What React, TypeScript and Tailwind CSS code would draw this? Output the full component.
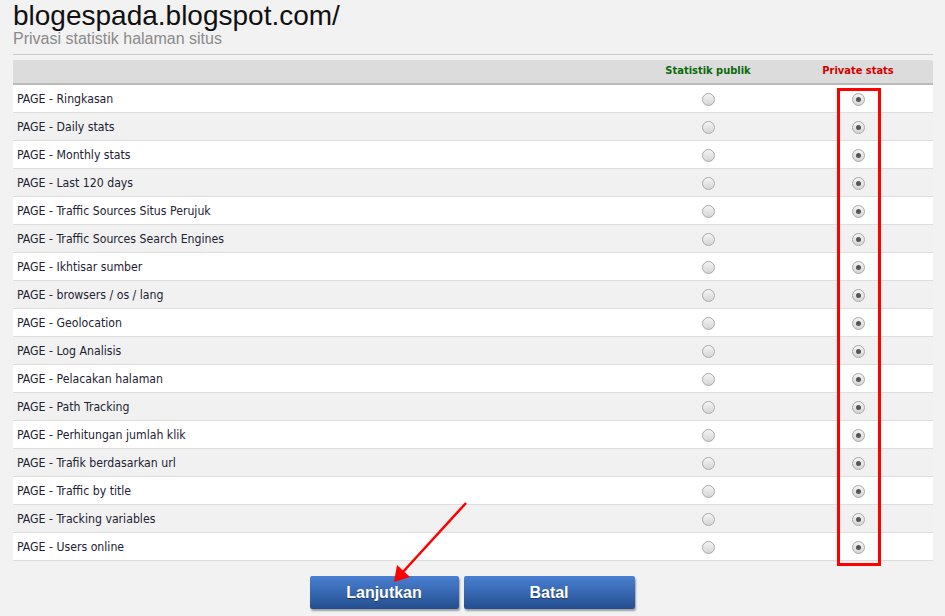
import React from "react";

const pages = [
  "Ringkasan",
  "Daily stats",
  "Monthly stats",
  "Last 120 days",
  "Traffic Sources Situs Perujuk",
  "Traffic Sources Search Engines",
  "Ikhtisar sumber",
  "browsers / os / lang",
  "Geolocation",
  "Log Analisis",
  "Pelacakan halaman",
  "Path Tracking",
  "Perhitungan jumlah klik",
  "Trafik berdasarkan url",
  "Traffic by title",
  "Tracking variables",
  "Users online",
];

const Radio: React.FC<{ checked?: boolean }> = ({ checked }) => (
  <span className="inline-flex w-[13px] h-[13px] rounded-full border border-[#a9a9a9] bg-gradient-to-b from-[#f4f4f4] to-[#d6d6d6] items-center justify-center">
    {checked && <span className="w-[5px] h-[5px] rounded-full bg-[#555]" />}
  </span>
);

const App: React.FC = () => {
  return (
    <div className="relative w-[945px] h-[616px] bg-[#f2f2f2] overflow-hidden font-['Liberation_Sans',Arial,sans-serif]">
      <div className="pl-[13px] pr-[12px]">
        <div className="text-[28px] leading-[30px] text-[#111] pt-[1px]">blogespada.blogspot.com/</div>
        <div className="text-[16px] leading-[16px] text-[#8a8a8a]">Privasi statistik halaman situs</div>
        <div className="mt-[7px] h-px bg-[#cccccc]" />

        <div className="mt-[5px] font-['DejaVu_Sans_Condensed','DejaVu_Sans',sans-serif]">
          <div className="flex h-[25px] bg-[#dcdcdc] rounded-tr-[3px] border-b-2 border-[#b9b9b9] text-[11px] font-bold items-center">
            <div className="flex-1" />
            <div className="w-[150px] text-center text-[#0a6a0a]">Statistik publik</div>
            <div className="w-[150px] text-center text-[#d40000]">Private stats</div>
          </div>
          {pages.map((p, i) => (
            <div
              key={p}
              className={`flex h-[28px] pt-[1px] items-center border-b border-[#dddddd] text-[12.2px] text-[#222233] ${i % 2 === 0 ? "bg-white" : "bg-[#f1f1f1]"}`}
            >
              <div className="flex-1 pl-[4px]">PAGE - {p}</div>
              <div className="w-[150px] flex justify-center">
                <Radio />
              </div>
              <div className="w-[150px] flex justify-center">
                <Radio checked />
              </div>
            </div>
          ))}
        </div>

        <div className="flex justify-center gap-[5px] mt-[15px] pr-[2px]">
          <button className="w-[149px] h-[33px] rounded-[2px] bg-gradient-to-b from-[#4a80d2] to-[#244f90] text-white font-bold text-[16px] shadow-[1px_2px_2px_rgba(0,0,0,0.35)] [text-shadow:0_1px_1px_rgba(0,0,0,0.4)]">
            Lanjutkan
          </button>
          <button className="w-[171px] h-[33px] rounded-[2px] bg-gradient-to-b from-[#4a80d2] to-[#244f90] text-white font-bold text-[16px] shadow-[1px_2px_2px_rgba(0,0,0,0.35)] [text-shadow:0_1px_1px_rgba(0,0,0,0.4)]">
            Batal
          </button>
        </div>
      </div>

      <div className="absolute left-[837px] top-[88px] w-[44px] h-[478px] border-[3px] border-[#ff0000]" />

      <svg className="absolute left-0 top-0" width="945" height="616">
        <line x1="466" y1="503" x2="402" y2="573" stroke="#ff0000" strokeWidth="2.5" />
        <polygon points="394,582 397,565 410,577" fill="#ff0000" />
      </svg>
    </div>
  );
};

export default App;
